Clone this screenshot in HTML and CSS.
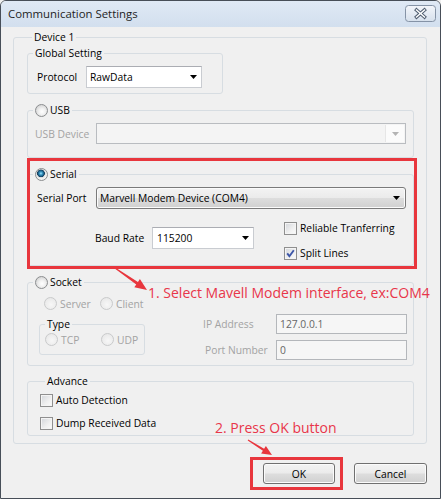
FILE: index.html
```html
<!DOCTYPE html>
<html>
<head>
<meta charset="utf-8">
<title>Communication Settings</title>
<link rel="stylesheet" href="styles.css">
</head>
<body>
<div class="window">
  <div class="titlebar">
    <span class="title">Communication Settings</span>
    <span class="close">
      <svg width="31" height="17" viewBox="0 0 31 17">
        <defs>
          <linearGradient id="cg" x1="0" y1="0" x2="0" y2="1">
            <stop offset="0" stop-color="#f3f6fb"/>
            <stop offset="1" stop-color="#d6e0ec"/>
          </linearGradient>
        </defs>
        <rect x="0.5" y="0.5" width="30" height="16" rx="3" fill="url(#cg)" stroke="#8593a6"/>
        <path d="M11.5 5 L19.5 12 M19.5 5 L11.5 12" stroke="#4f5d70" stroke-width="3.4" stroke-linecap="square"/>
        <path d="M11.5 5 L19.5 12 M19.5 5 L11.5 12" stroke="#ffffff" stroke-width="1.5" stroke-linecap="square"/>
      </svg>
    </span>
  </div>

  <div class="client">
    <fieldset class="group device">
      <legend>Device 1</legend>

      <fieldset class="group global">
        <legend>Global Setting</legend>
        <div class="row">
          <span class="lbl lbl-protocol">Protocol</span>
          <div class="combo white w-protocol">
            <span class="val">RawData</span>
            <svg class="dd" width="7" height="4" viewBox="0 0 7 4"><polygon points="0,0 7,0 3.5,4" fill="#000"/></svg>
          </div>
        </div>
      </fieldset>

      <fieldset class="group usb">
        <legend><span class="radio"></span>USB</legend>
        <div class="row">
          <span class="lbl lbl-usb disabled">USB Device</span>
          <div class="combo off-combo w-usb">
            <span class="ddbox">
              <svg width="7" height="4" viewBox="0 0 7 4"><polygon points="0,0 7,0 3.5,4" fill="#b4b4b4"/></svg>
            </span>
          </div>
        </div>
      </fieldset>

      <fieldset class="group serial">
        <legend><span class="radio on"></span>Serial</legend>
        <div class="row">
          <span class="lbl lbl-serial">Serial Port</span>
          <div class="combo btn-combo w-serial">
            <span class="val">Marvell Modem Device (COM4)</span>
            <svg class="dd" width="7" height="4" viewBox="0 0 7 4"><polygon points="0,0 7,0 3.5,4" fill="#000"/></svg>
          </div>
        </div>
        <div class="baud-row">
          <div class="baud">
            <span class="lbl lbl-baud">Baud Rate</span>
            <div class="combo white w-baud">
              <span class="val">115200</span>
              <svg class="dd" width="7" height="4" viewBox="0 0 7 4"><polygon points="0,0 7,0 3.5,4" fill="#000"/></svg>
            </div>
          </div>
          <div class="checks">
            <div class="chk"><span class="check"></span>Reliable Tranferring</div>
            <div class="chk"><span class="check"><svg width="11" height="11" viewBox="0 0 11 11"><path d="M2.2 5.4 L4.4 8.2 L8.8 2.2" fill="none" stroke="#3d56a8" stroke-width="1.9"/></svg></span>Split Lines</div>
          </div>
        </div>
      </fieldset>

      <fieldset class="group socket">
        <legend><span class="radio"></span>Socket</legend>
        <div class="mode-row">
          <span class="opt w-server disabled"><span class="radio dis"></span>Server</span>
          <span class="opt disabled"><span class="radio dis"></span>Client</span>
        </div>
        <div class="socket-body">
          <fieldset class="group type">
            <legend>Type</legend>
            <div class="type-row">
              <span class="opt w-tcp disabled"><span class="radio dis"></span>TCP</span>
              <span class="opt disabled"><span class="radio dis"></span>UDP</span>
            </div>
          </fieldset>
          <div class="net">
            <span class="nlbl">IP Address</span>
            <div class="input">127.0.0.1</div>
            <span class="nlbl port">Port Number</span>
            <div class="input">0</div>
          </div>
        </div>
      </fieldset>

      <fieldset class="group advance">
        <legend>Advance</legend>
        <div class="chk adv-auto"><span class="check"></span>Auto Detection</div>
        <div class="chk adv-dump"><span class="check"></span>Dump Received Data</div>
      </fieldset>
    </fieldset>

    <div class="buttons">
      <button class="btn w-ok">OK</button>
      <button class="btn w-cancel">Cancel</button>
    </div>
  </div>

  <div class="redbox box-serial"></div>
  <svg class="arrow arrow1" width="44" height="36" viewBox="0 0 44 36">
    <polygon points="7.3,5.6 29.95,19.96 31.9,17.1 39,28 26.3,25.3 28.25,22.4 6.7,6.4" fill="#e8363d"/>
  </svg>
  <span class="note note1">1. Select Mavell Modem interface, ex:COM4</span>

  <div class="redbox box-ok"></div>
  <svg class="arrow arrow2" width="32" height="22" viewBox="0 0 32 22">
    <polygon points="4.3,3.6 20.1,12.7 21.9,9.9 28,19 17.1,17.5 18.9,14.7 3.7,4.4" fill="#e8363d"/>
  </svg>
  <span class="note note2">2. Press OK button</span>
</div>
</body>
</html>
```

FILE: styles.css
```css
* { box-sizing: border-box; }

html, body {
  margin: 0;
  padding: 0;
}

body {
  width: 441px;
  height: 499px;
  overflow: hidden;
  background: #f0f0f0;
  font-family: "Open Sans", "Noto Sans", sans-serif;
  font-size: 10.3px;
  color: #000;
}

.window {
  position: relative;
  width: 441px;
  height: 499px;
  border: 1px solid #474e58;
  border-radius: 6px 6px 0 0;
  background: #f0f0f0;
  display: flex;
  flex-direction: column;
}

/* ---------- title bar ---------- */
.titlebar {
  height: 26px;
  display: flex;
  justify-content: space-between;
  align-items: flex-start;
  padding: 0 4px 0 7px;
  background: linear-gradient(#dfe9f5, #d2dfee);
  border-radius: 5px 5px 0 0;
}

.title {
  font-size: 11.4px;
  line-height: 26px;
  color: #1e1e1e;
}

.close {
  display: block;
  margin-top: 4px;
  height: 17px;
}

.close svg { display: block; }

/* ---------- client ---------- */
.client {
  flex: 1;
  padding: 3px 13px 0 12px;
}

.group {
  margin: 0;
  padding: 0;
  border: 1px solid #d7dde2;
  border-radius: 3px;
  min-width: 0;
}

.group > legend {
  margin-left: 5px;
  padding: 0 2px;
  height: 15px;
  line-height: 15px;
  display: flex;
  align-items: center;
  gap: 2px;
}

.device {
  width: 414px;
  padding: 0 12px 7px 13px;
}

.row {
  display: flex;
  align-items: center;
}

.lbl { line-height: 14px; }

.disabled { color: #a3a3a3; }

/* global */
.global {
  width: 196px;
  margin-top: 1px;
  padding: 5px 0 5px 0;
}
.lbl-protocol { width: 58px; padding-left: 9px; }

/* usb */
.usb {
  margin-top: 9px;
  padding: 5px 0 13px 0;
}
.lbl-usb { width: 68px; padding-left: 7px; }

/* serial */
.serial {
  margin-top: 9px;
  padding: 5px 0 5px 0;
}
.lbl-serial { width: 68px; padding-left: 9px; }

.baud-row {
  display: flex;
  align-items: flex-start;
  margin-top: 13px;
  padding-left: 67px;
}

.baud {
  display: flex;
  align-items: center;
  margin-top: 5px;
}

.lbl-baud { width: 57px; }

.checks {
  display: flex;
  flex-direction: column;
  gap: 12px;
  margin-left: 30px;
}

/* combos */
.combo {
  display: flex;
  align-items: center;
  justify-content: space-between;
  height: 22px;
}

.combo .val { line-height: 14px; }

.white {
  background: #fff;
  border: 1px solid #c9ccd1;
  border-top-color: #abadb3;
  padding: 0 4px 0 3px;
}

.w-protocol { width: 116px; }
.w-baud { width: 102px; padding-left: 4px; }

.off-combo {
  width: 310px;
  height: 21px;
  background: #f4f4f4;
  border: 1px solid #b9bcc0;
  justify-content: flex-end;
  padding: 1px;
}

.ddbox {
  width: 19px;
  height: 100%;
  background: #fbfbfb;
  border-left: 1px solid #e6e6e6;
  display: flex;
  align-items: center;
  justify-content: center;
}

.btn-combo {
  width: 310px;
  border: 1px solid #7a7a7a;
  border-radius: 3px;
  background: linear-gradient(#f3f3f3 0%, #ebebeb 48%, #dddddd 52%, #d0d0d0 100%);
  box-shadow: inset 0 0 0 1px #fbfbfb;
  padding: 0 5px 0 3px;
}

.dd { display: block; flex: none; }

/* radios */
.radio {
  display: inline-block;
  flex: none;
  width: 13px;
  height: 13px;
  border-radius: 50%;
  border: 1px solid #8b8d8f;
  background: radial-gradient(circle at 55% 60%, #ffffff 0, #f1f1f1 35%, #d6d6d6 75%, #e6e6e6 100%);
}

.radio.on {
  background: radial-gradient(circle at 45% 40%, #a9e6fb 0, #3b9bc8 1.4px, #1d5f86 2.8px, #143e5c 3.6px, #d9d9d9 4.1px, #eeeeee 5px, #f8f8f8 100%);
}

.radio.dis {
  border-color: #c9cacb;
  background: radial-gradient(circle at 55% 60%, #f7f7f7 0, #ececec 60%, #e2e2e2 100%);
}

/* checkboxes */
.chk {
  display: flex;
  align-items: center;
  gap: 3px;
  height: 13px;
  line-height: 13px;
}

.check {
  display: block;
  flex: none;
  width: 13px;
  height: 13px;
  border: 1px solid #8f8f8f;
  background: linear-gradient(135deg, #d2d5da 0%, #f0f0f0 60%, #fbfbfb 100%);
  box-shadow: inset 0 0 0 1px #f4f4f4;
}

.check svg { display: block; }

/* socket */
.socket {
  margin-top: 9px;
  padding: 0 0 5px 0;
}

.opt {
  display: flex;
  align-items: center;
  gap: 3px;
  height: 15px;
}

.mode-row {
  display: flex;
  margin-top: 6px;
  padding-left: 16px;
}

.w-server { width: 56px; }

.socket-body {
  display: flex;
  align-items: flex-start;
  margin-top: 3px;
}

.type {
  width: 106px;
  margin-left: 11px;
  margin-top: 3px;
  padding: 0 0 7px 0;
}

.type-row {
  display: flex;
  padding-left: 5px;
}

.w-tcp { width: 56px; }

.net {
  display: grid;
  grid-template-columns: 73px 131px;
  row-gap: 6px;
  align-items: center;
  margin-left: 58px;
}

.nlbl { color: #a3a3a3; }
.nlbl.port { padding-left: 2px; }

.input {
  height: 20px;
  border: 1px solid #b4b7bb;
  background: #f6f6f6;
  color: #666;
  padding-left: 3px;
  line-height: 18px;
}

/* advance */
.advance {
  margin-top: 8px;
  padding: 0 0 5px 12px;
}

.adv-auto { margin-top: 5px; }
.adv-dump { margin-top: 10px; }

/* buttons */
.buttons {
  display: flex;
  justify-content: flex-end;
  gap: 19px;
  margin-top: 19px;
}

.btn {
  height: 21px;
  font: inherit;
  color: #000;
  border: 1px solid #707070;
  border-radius: 3px;
  background: linear-gradient(#f3f3f3 0%, #ebebeb 48%, #dddddd 52%, #d0d0d0 100%);
  box-shadow: inset 0 0 0 1px #fbfbfb;
  padding: 0;
}

.w-ok { width: 72px; }
.w-cancel { width: 73px; }

/* ---------- annotations (overlay) ---------- */
.redbox {
  position: absolute;
  border: 3px solid #e8363d;
}

.box-serial {
  left: 26px;
  top: 157px;
  width: 390px;
  height: 111px;
}

.box-ok {
  left: 249px;
  top: 456px;
  width: 93px;
  height: 33px;
}

.arrow {
  position: absolute;
  display: block;
}

.arrow1 { left: 107px; top: 261px; }
.arrow2 { left: 243px; top: 435px; }

.note {
  position: absolute;
  font-size: 14px;
  line-height: 18px;
  color: #e8364a;
  white-space: nowrap;
}

.note1 { left: 147px; top: 283px; }
.note2 { left: 214px; top: 418px; }
```
